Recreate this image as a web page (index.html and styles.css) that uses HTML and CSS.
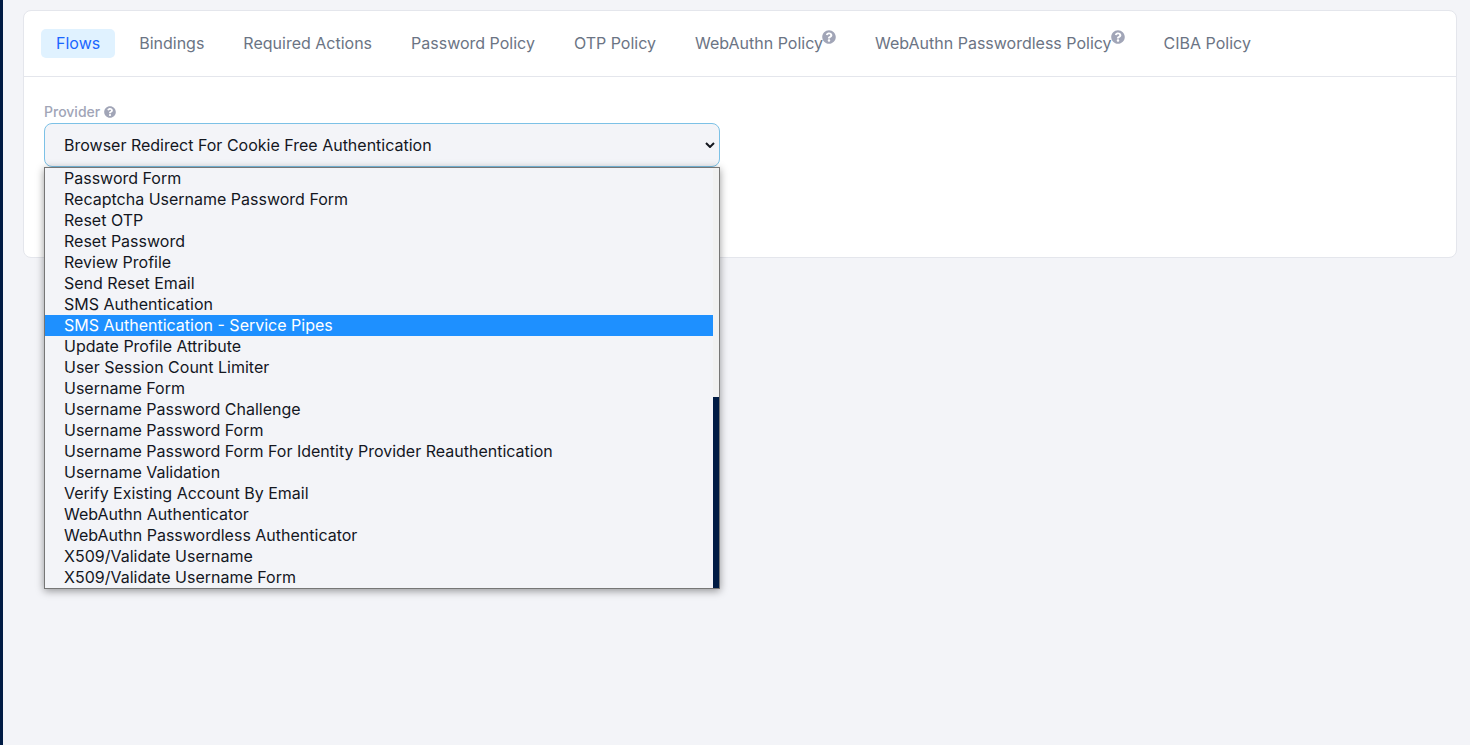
FILE: index.html
```html
<!DOCTYPE html>
<html lang="en">
<head>
  <meta charset="UTF-8" />
  <meta name="viewport" content="width=device-width, initial-scale=1.0"/>
  <title>Authentication</title>
  <link rel="stylesheet" href="styles.css">
</head>
<body>
  <svg class="sprite" aria-hidden="true">
    <symbol id="help" viewBox="0 0 512 512">
      <path fill="currentColor" d="M504 256c0 137-111 248-248 248S8 393 8 256 119 8 256 8s248 111 248 248zM262.700 90c-54.500 0-89.300 23-116.500 63.800-3.500 5.300-2.400 12.400 2.700 16.300l34.700 26.300c5.200 3.900 12.600 3 16.700-2.100 17.900-22.700 30.100-35.800 57.300-35.800 20.400 0 45.700 13.100 45.700 33 0 15-12.400 22.700-32.500 34C247.100 238.500 216 254.900 216 296v4c0 6.600 5.400 12 12 12h56c6.600 0 12-5.400 12-12v-1.300c0-28.500 83.200-29.600 83.200-106.700 0-58-60.200-102-116.500-102zM256 338c-25.400 0-46 20.600-46 46s20.600 46 46 46 46-20.600 46-46-20.600-46-46-46z"/>
    </symbol>
  </svg>

  <main class="card">
    <nav class="tabs">
      <a class="tab active" href="#flows">Flows</a>
      <a class="tab" href="#bindings">Bindings</a>
      <a class="tab" href="#required-actions">Required Actions</a>
      <a class="tab" href="#password-policy">Password Policy</a>
      <a class="tab" href="#otp-policy">OTP Policy</a>
      <a class="tab" href="#webauthn-policy">WebAuthn Policy<svg class="help help-tab"><use href="#help"/></svg></a>
      <a class="tab" href="#webauthn-passwordless">WebAuthn Passwordless Policy<svg class="help help-tab"><use href="#help"/></svg></a>
      <a class="tab" href="#ciba-policy">CIBA Policy</a>
    </nav>

    <form class="form">
      <div class="field">
        <label class="label" for="provider">Provider <svg class="help"><use href="#help"/></svg></label>
        <div class="picker">
          <select class="select" id="provider">
            <option>Browser Redirect For Cookie Free Authentication</option>
          </select>
          <svg class="chevron" viewBox="0 0 10 6" aria-hidden="true"><path d="M1 1l4 4 4-4"/></svg>
          <div class="menu">
            <ul class="options" role="listbox" aria-label="Provider">
              <li role="option">Password Form</li>
              <li role="option">Recaptcha Username Password Form</li>
              <li role="option">Reset OTP</li>
              <li role="option">Reset Password</li>
              <li role="option">Review Profile</li>
              <li role="option">Send Reset Email</li>
              <li role="option">SMS Authentication</li>
              <li role="option" class="selected" aria-selected="true">SMS Authentication - Service Pipes</li>
              <li role="option">Update Profile Attribute</li>
              <li role="option">User Session Count Limiter</li>
              <li role="option">Username Form</li>
              <li role="option">Username Password Challenge</li>
              <li role="option">Username Password Form</li>
              <li role="option">Username Password Form For Identity Provider Reauthentication</li>
              <li role="option">Username Validation</li>
              <li role="option">Verify Existing Account By Email</li>
              <li role="option">WebAuthn Authenticator</li>
              <li role="option">WebAuthn Passwordless Authenticator</li>
              <li role="option">X509/Validate Username</li>
              <li role="option">X509/Validate Username Form</li>
            </ul>
            <div class="scrollbar"><div class="thumb"></div></div>
          </div>
        </div>
      </div>
    </form>
  </main>
</body>
</html>
```
FILE: styles.css
```css
:root {
  --navy: #001b44;
  --bg: #f3f4f8;
  --border: #e4e6ec;
  --text: #14171f;
  --muted: #6b7484;
  --label: #a1a5b7;
}

* {
  margin: 0;
  padding: 0;
  box-sizing: border-box;
}

body {
  min-height: 100vh;
  padding: 10px 13px 10px 20px;
  border-left: 3px solid var(--navy);
  background: var(--bg);
  color: var(--text);
  font-family: Inter, "Liberation Sans", sans-serif;
  font-size: 16px;
}

.sprite {
  display: none;
}

.card {
  background: #fff;
  border: 1px solid var(--border);
  border-radius: 8px;
}

.tabs {
  display: flex;
  flex-wrap: wrap;
  gap: 9px;
  padding: 18px 17px;
  border-bottom: 1px solid var(--border);
}

.tab {
  display: flex;
  padding: 0 15px;
  border-radius: 5px;
  color: var(--muted);
  line-height: 29px;
  text-decoration: none;
}

.tab.active {
  background: #e0f2ff;
  color: #1a66ff;
}

.help {
  width: 12px;
  height: 12px;
  color: var(--label);
}

.help-tab {
  width: 14px;
  height: 14px;
  margin: 1px 0 0 -1px;
}

.form {
  display: grid;
  grid-template-columns: 1fr 1fr;
  gap: 40px;
  padding: 25px 20px 90px;
}

.label {
  display: flex;
  align-items: center;
  gap: 4px;
  margin-bottom: 1px;
  color: var(--label);
  font-size: 14px;
  font-weight: 500;
  line-height: 20px;
}

.picker {
  position: relative;
}

.select {
  display: block;
  appearance: none;
  width: 100%;
  height: 44px;
  padding: 0 19px;
  border: 1px solid #7cc1e6;
  border-radius: 8px;
  background: var(--bg);
  color: var(--text);
  font: inherit;
}

.chevron {
  position: absolute;
  top: 19px;
  right: 5px;
  width: 10px;
  height: 6px;
  fill: none;
  stroke: var(--text);
  stroke-width: 2;
  pointer-events: none;
}

.menu {
  position: absolute;
  top: 100%;
  left: 0;
  right: 0;
  display: flex;
  border: 1px solid #767676;
  background: var(--bg);
  box-shadow: 0 2px 8px rgba(0, 0, 0, 0.4);
}

.options {
  flex: 1;
  list-style: none;
}

.options li {
  padding: 0 19px;
  line-height: 21px;
}

.options .selected {
  background: #1e90ff;
  color: #fff;
}

.scrollbar {
  display: flex;
  align-items: flex-end;
  width: 6px;
  background: #f1f1f1;
}

.thumb {
  width: 100%;
  height: 191px;
  background: var(--navy);
}
```
